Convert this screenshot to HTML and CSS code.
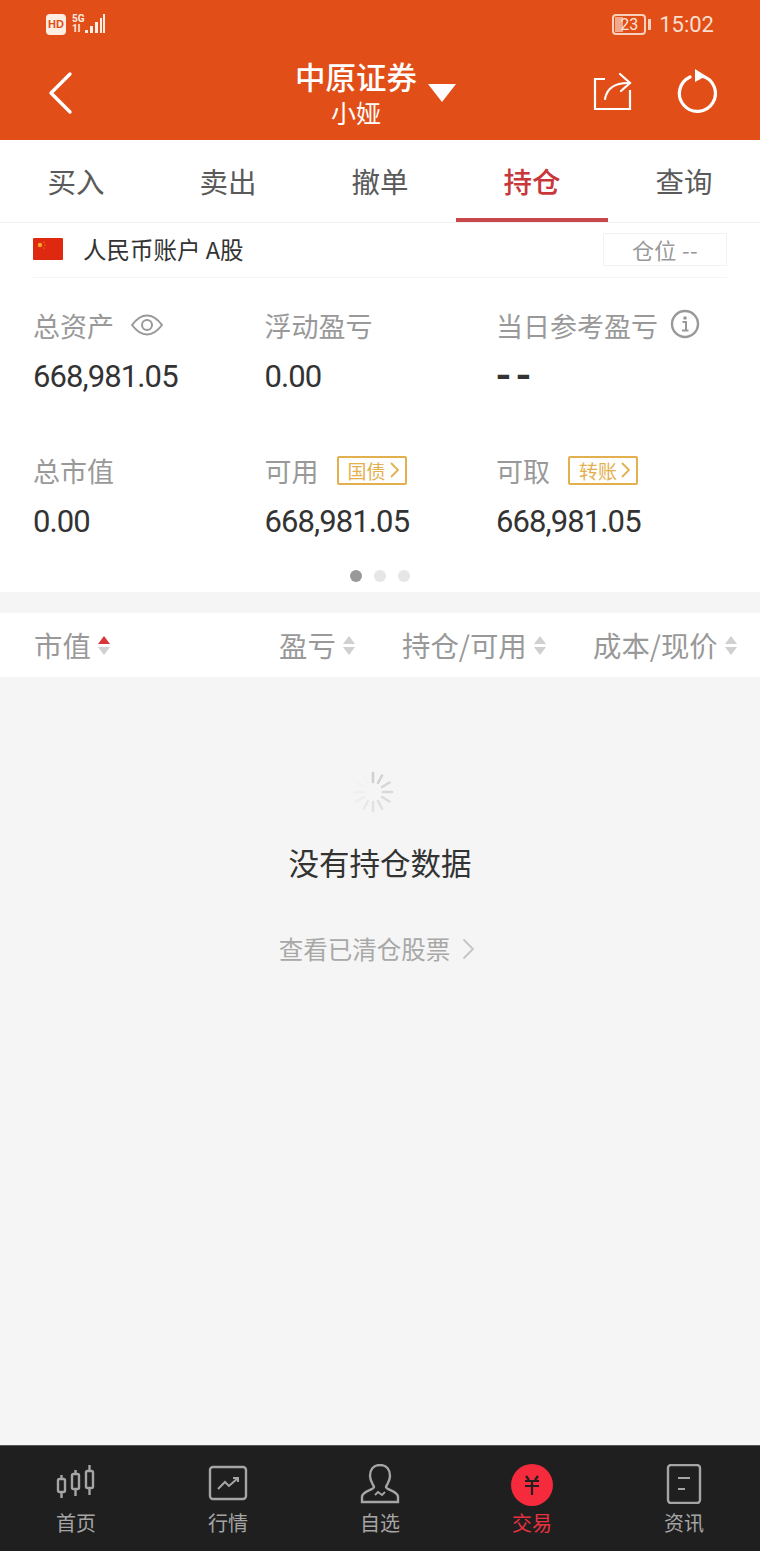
FILE: index.html
```html
<!DOCTYPE html>
<html lang="zh-CN">
<head>
    <meta charset="UTF-8">
    <title>持仓</title>
    <link rel="stylesheet" href="styles.css">
</head>
<body>
<div class="page">
    <!-- 顶部 -->
    <header class="header">
        <div class="statusbar">
            <div class="status-left">
                <span class="hd">HD</span>
                <span class="net"><span>5G</span><span>1l</span></span>
                <svg class="signal" width="21" height="21" viewBox="0 0 21 21"><g fill="#fdeee4"><rect x="0" y="17" width="3" height="3"/><rect x="5" y="13" width="3" height="7"/><rect x="10" y="9" width="3" height="11"/><rect x="15" y="5" width="2" height="15"/><rect x="18" y="1" width="2" height="19"/></g></svg>
            </div>
            <div class="status-right">
                <span class="battery"><span class="battery-fill"></span><span class="battery-num">23</span></span>
                <span class="battery-tip"></span>
                <span class="time">15:02</span>
            </div>
        </div>
        <div class="navbar">
            <svg class="back" width="28" height="44" viewBox="0 0 28 44"><path d="M23 3 L4 22 L23 41" fill="none" stroke="#fff" stroke-width="3.4" stroke-linecap="round" stroke-linejoin="round"/></svg>
            <div class="nav-title">
                <div class="broker">中原证券</div>
                <div class="user">小娅</div>
                <span class="caret"></span>
            </div>
            <div class="nav-icons">
                <svg width="40" height="40" viewBox="0 0 40 40"><path d="M12 7 H2 V37 H37 V18" fill="none" stroke="#fff" stroke-width="2.2"/><path d="M12 27 C14 16 22 11 35 11" fill="none" stroke="#fff" stroke-width="2.2" stroke-linecap="round"/><path d="M27 2 L37 11 L28 19" fill="none" stroke="#fff" stroke-width="2.2" stroke-linecap="round"/></svg>
                <svg width="42" height="46" viewBox="0 0 42 46"><path d="M15 8 A18 18 0 1 0 27 7" fill="none" stroke="#fff" stroke-width="3.2" stroke-linecap="round"/><path d="M20 0 L31 7 L20 13 Z" fill="#fff"/></svg>
            </div>
        </div>
    </header>

    <nav class="tabs">
        <div class="tab">买入</div>
        <div class="tab">卖出</div>
        <div class="tab">撤单</div>
        <div class="tab active">持仓</div>
        <div class="tab">查询</div>
    </nav>

    <section class="assets">
        <div class="account">
            <svg class="flag" width="30" height="22" viewBox="0 0 30 22"><rect width="30" height="22" rx="1" fill="#de2910"/><circle cx="7" cy="7" r="2.2" fill="#f5a623"/><circle cx="11" cy="4" r=".6" fill="#f5a623"/><circle cx="12" cy="7" r=".6" fill="#f5a623"/><circle cx="11" cy="10" r=".6" fill="#f5a623"/></svg>
            <span class="account-name">人民币账户 A股</span>
            <span class="position">仓位 --</span>
        </div>
        <div class="asset-grid">
            <div class="cell">
                <div class="cell-label">总资产
                    <svg class="eye" width="32" height="22" viewBox="0 0 32 22"><path d="M1 11 C7 3 12 1.500 16 1.500 C20 1.500 25 3 31 11 C25 19 20 20.500 16 20.500 C12 20.500 7 19 1 11 Z" fill="none" stroke="#999" stroke-width="2"/><circle cx="16" cy="11" r="5" fill="none" stroke="#999" stroke-width="2"/></svg>
                </div>
                <div class="cell-value">668,981.05</div>
            </div>
            <div class="cell">
                <div class="cell-label">浮动盈亏</div>
                <div class="cell-value">0.00</div>
            </div>
            <div class="cell">
                <div class="cell-label">当日参考盈亏
                    <svg class="info" width="30" height="30" viewBox="0 0 30 30"><circle cx="15" cy="15" r="13" fill="none" stroke="#999" stroke-width="2.400"/><circle cx="15" cy="9" r="1.800" fill="#999"/><path d="M12.500 13 H16 V21 M12 21.500 H18.500" fill="none" stroke="#999" stroke-width="2"/></svg>
                </div>
                <div class="cell-value dashes">--</div>
            </div>
            <div class="cell">
                <div class="cell-label">总市值</div>
                <div class="cell-value">0.00</div>
            </div>
            <div class="cell">
                <div class="cell-label">可用 <span class="tag">国债<svg width="9" height="16" viewBox="0 0 9 16"><path d="M1 1 L8 8 L1 15" fill="none" stroke="#e3b04f" stroke-width="1.800"/></svg></span></div>
                <div class="cell-value">668,981.05</div>
            </div>
            <div class="cell">
                <div class="cell-label">可取 <span class="tag">转账<svg width="9" height="16" viewBox="0 0 9 16"><path d="M1 1 L8 8 L1 15" fill="none" stroke="#e3b04f" stroke-width="1.800"/></svg></span></div>
                <div class="cell-value">668,981.05</div>
            </div>
        </div>
        <div class="dots">
            <span class="dot on"></span>
            <span class="dot"></span>
            <span class="dot"></span>
        </div>
    </section>

    <div class="table-head">
        <div class="col col-value">市值<span class="sort up"><i></i><b></b></span></div>
        <div class="col col-pl">盈亏<span class="sort"><i></i><b></b></span></div>
        <div class="col col-hold">持仓/可用<span class="sort"><i></i><b></b></span></div>
        <div class="col col-cost">成本/现价<span class="sort"><i></i><b></b></span></div>
    </div>

    <main class="empty">
        <svg class="spinner" width="42" height="42" viewBox="0 0 42 42">
            <g stroke-width="2.600" stroke-linecap="round" fill="none">
                <path d="M21 2 V11" stroke="#d0d0d0"/>
                <path d="M30 4.500 L26 12" stroke="#d2d2d2"/>
                <path d="M37.500 11.500 L30 16" stroke="#d6d6d6"/>
                <path d="M40 21 H31" stroke="#d8d8d8"/>
                <path d="M37.500 30.500 L30 26" stroke="#dcdcdc"/>
                <path d="M30 37.500 L26 30" stroke="#e0e0e0"/>
                <path d="M21 40 V31" stroke="#e2e2e2"/>
                <path d="M12 37.500 L16 30" stroke="#e8e8e8"/>
                <path d="M4.500 30.500 L12 26" stroke="#ededed"/>
                <path d="M2 21 H11" stroke="#f0f0f0"/>
                <path d="M4.500 11.500 L12 16" stroke="#f2f2f2"/>
                <path d="M12 4.500 L16 12" stroke="#f3f3f3"/>
            </g>
        </svg>
        <div class="empty-title">没有持仓数据</div>
        <div class="empty-link">查看已清仓股票
            <svg width="13" height="22" viewBox="0 0 13 22"><path d="M1.500 1.500 L11 11 L1.500 20.500" fill="none" stroke="#c4c4c4" stroke-width="1.800"/></svg>
        </div>
    </main>

    <!-- 底部导航 -->
    <footer class="tabbar">
        <div class="tabbar-item">
            <svg width="40" height="38" viewBox="0 0 40 38"><g fill="none" stroke="#a5a5a5" stroke-width="2.400"><rect x="2" y="14" width="7" height="13" rx="1.500"/><path d="M5.500 10 V14 M5.500 27 V33"/><rect x="16" y="9" width="7" height="15" rx="1.500"/><path d="M19.500 5 V9 M19.500 24 V31"/><rect x="30" y="6" width="7" height="17" rx="1.500"/><path d="M33.500 0 V6 M33.500 23 V30"/></g></svg>
            <span>首页</span>
        </div>
        <div class="tabbar-item">
            <svg width="40" height="38" viewBox="0 0 40 38"><rect x="2" y="2" width="36" height="32" rx="3" fill="none" stroke="#a5a5a5" stroke-width="2.400"/><path d="M10 24 L17 17 L21 21 L30 13 M25 13 H30 V17" fill="none" stroke="#a5a5a5" stroke-width="2"/></svg>
            <span>行情</span>
        </div>
        <div class="tabbar-item">
            <svg width="40" height="40" viewBox="0 0 40 40"><path d="M20 1 C13 1 10 6 10 12 C10 17 13 20 14 23 C14 26 2 27 2 33 V38 H38 V33 C38 27 26 26 26 23 C27 20 30 17 30 12 C30 6 27 1 20 1 Z" fill="none" stroke="#a5a5a5" stroke-width="2.400"/><path d="M15 31 L18 28 L22 31 L25 28" fill="none" stroke="#a5a5a5" stroke-width="1.800"/></svg>
            <span>自选</span>
        </div>
        <div class="tabbar-item active">
            <span class="trade-icon">
                <svg width="16" height="20" viewBox="0 0 16 20"><path d="M2 1 L5 5 M14 1 L11 5 M1 6 H15 M1 11 H15 M8 6 V20" fill="none" stroke="#1f1f1f" stroke-width="2.200"/></svg>
            </span>
            <span>交易</span>
        </div>
        <div class="tabbar-item">
            <svg width="40" height="40" viewBox="0 0 40 40"><rect x="4" y="1" width="32" height="38" rx="3" fill="none" stroke="#a5a5a5" stroke-width="2.400"/><path d="M14 14 H26 M14 25 H21" fill="none" stroke="#a5a5a5" stroke-width="2"/></svg>
            <span>资讯</span>
        </div>
    </footer>
</div>
</body>
</html>
```

FILE: styles.css
```css
* {
    box-sizing: border-box;
}
body {
    margin: 0;
    font-family: "Noto Sans CJK SC", "Noto Sans", sans-serif;
    background-color: #f5f5f5;
}
.page {
    width: 760px;
    height: 1551px;
    display: flex;
    flex-direction: column;
    overflow: hidden;
}

/* header */
.header {
    height: 140px;
    background-color: #e24e17;
    color: #fff;
}
.statusbar {
    height: 48px;
    padding: 12px 46px 0;
    display: flex;
    justify-content: space-between;
}
.status-left {
    display: flex;
    align-items: flex-start;
}
.hd {
    width: 20px;
    height: 21px;
    margin-top: 2px;
    background: #fdeee4;
    color: #e24e17;
    border-radius: 4px;
    font: bold 11px/21px "Liberation Sans", sans-serif;
    text-align: center;
}
.net {
    margin: 2px 0 0 6px;
    display: flex;
    flex-direction: column;
    font: bold 10px/10px "Roboto", sans-serif;
    color: #fdeee4;
    width: 14px;
}
.signal {
    margin: 1px 0 0 -1px;
}
.status-right {
    display: flex;
    align-items: flex-start;
    color: #fbe6d8;
}
.battery {
    position: relative;
    width: 34px;
    height: 21px;
    margin-top: 2px;
    border: 2px solid #f8d0bb;
    border-radius: 4px;
}
.battery-fill {
    position: absolute;
    left: 1px;
    top: 1px;
    bottom: 1px;
    width: 8px;
    background: #f2a98a;
}
.battery-num {
    position: relative;
    display: block;
    font: 16px/17px "Roboto", sans-serif;
    text-align: center;
}
.battery-tip {
    width: 3px;
    height: 11px;
    margin: 7px 0 0 2px;
    background: #f8d0bb;
}
.time {
    margin-left: 8px;
    font: 22px/26px "Roboto", sans-serif;
    color: #f9dfce;
}
.navbar {
    height: 92px;
    position: relative;
    display: flex;
    align-items: center;
    justify-content: space-between;
    padding: 0 43px 4px 47px;
}
.nav-title {
    position: absolute;
    left: 0;
    right: 48px;
    top: 10px;
    text-align: center;
}
.broker {
    font-size: 30.5px;
    font-weight: 500;
    line-height: 36px;
}
.user {
    margin-top: 3px;
    font-size: 25px;
    line-height: 30px;
}
.caret {
    position: absolute;
    left: 428px;
    top: 26px;
    width: 0;
    height: 0;
    border-left: 14px solid transparent;
    border-right: 14px solid transparent;
    border-top: 18px solid #fff;
}
.back {
    margin-top: 2px;
}
.nav-icons {
    display: flex;
    align-items: center;
    gap: 42px;
}

/* tabs */
.tabs {
    height: 83px;
    display: flex;
    background: #fff;
    border-bottom: 1px solid #f2f2f2;
}
.tab {
    width: 152px;
    text-align: center;
    font-size: 28.5px;
    line-height: 82px;
    color: #5a5a5a;
}
.tab.active {
    color: #c8373a;
    font-weight: 500;
    border-bottom: 4px solid #c8474a;
    height: 82px;
}

/* assets */
.assets {
    height: 369px;
    background: #fff;
}
.account {
    height: 55px;
    margin: 0 33px;
    display: flex;
    align-items: center;
    border-bottom: 1px solid #f4f4f4;
}
.flag {
    margin-bottom: 2px;
}
.account-name {
    margin-left: 20px;
    margin-top: -3px;
    font-size: 23.5px;
    color: #333;
}
.position {
    margin-left: auto;
    width: 124px;
    height: 33px;
    border: 1px solid #f2f2f2;
    text-align: center;
    font-size: 22px;
    line-height: 31px;
    color: #999;
    letter-spacing: 0.4px;
    margin-top: -2px;
}
.asset-grid {
    display: grid;
    grid-template-columns: 231.5px 231.5px 231.5px;
    grid-auto-rows: 145px;
    padding: 29px 0 0 33px;
}
.cell-label {
    display: flex;
    align-items: center;
    height: 36px;
    font-size: 27px;
    color: #999;
}
.eye {
    margin-left: 17px;
}
.info {
    margin-left: 12px;
    margin-top: -2px;
}
.cell-value {
    margin-top: 15px;
    font-family: "Roboto", sans-serif;
    font-size: 31px;
    line-height: 38px;
    letter-spacing: -0.9px;
    color: #333;
}
.dashes {
    margin-top: 13px;
    font-size: 44px;
    font-weight: 500;
    letter-spacing: 5px;
}
.tag {
    display: inline-flex;
    align-items: center;
    height: 29px;
    margin-left: 18px;
    padding: 0 6px 0 9px;
    border: 2px solid #e3b04f;
    border-radius: 2px;
    font-size: 19px;
    color: #e3b04f;
    gap: 4px;
}
.dots {
    display: flex;
    justify-content: center;
    gap: 12px;
    margin-top: -27px;
}
.dot {
    width: 12px;
    height: 12px;
    border-radius: 50%;
    background: #e6e6e6;
}
.dot.on {
    background: #999;
}

/* table head */
.table-head {
    margin-top: 21px;
    height: 64px;
    flex-shrink: 0;
    background: #fff;
    position: relative;
    font-size: 28.4px;
    color: #999;
}
.col {
    position: absolute;
    display: flex;
    align-items: center;
    top: 13px;
    line-height: 38px;
}
.col-value { left: 34px; }
.col-pl { left: 279px; }
.col-hold { left: 402px; }
.col-cost { left: 593px; }
.sort {
    display: flex;
    flex-direction: column;
    gap: 3px;
    margin-left: 7px;
}
.sort i, .sort b {
    width: 0;
    height: 0;
    border-left: 6px solid transparent;
    border-right: 6px solid transparent;
}
.sort i {
    border-bottom: 8px solid #d0d0d0;
}
.sort b {
    border-top: 8px solid #d0d0d0;
}
.sort.up i {
    border-bottom-color: #d9363a;
}

/* empty */
.empty {
    flex: 1;
    display: flex;
    flex-direction: column;
    align-items: center;
    padding-top: 94px;
    background: #f5f5f5;
}
.spinner {
    margin-right: 14px;
}
.empty-title {
    margin-top: 27px;
    font-size: 30.5px;
    line-height: 44px;
    color: #333;
}
.empty-link {
    margin-top: 48px;
    margin-right: 6px;
    display: flex;
    align-items: center;
    gap: 12px;
    font-size: 24.5px;
    line-height: 34px;
    color: #a8a8a8;
}

/* bottom tabs */
.tabbar {
    height: 106px;
    flex-shrink: 0;
    display: flex;
    background: #1f1f1f;
    border-top: 1px solid #555;
}
.tabbar-item {
    width: 152px;
    padding-top: 18px;
    display: flex;
    flex-direction: column;
    align-items: center;
    font-size: 20px;
    line-height: 28px;
    color: #a5a5a5;
}
.tabbar-item svg {
    height: 40px;
}
.tabbar-item.active {
    color: #e8323f;
}
.trade-icon {
    width: 42px;
    height: 42px;
    margin-bottom: -2px;
    border-radius: 50%;
    background: #f52a3c;
    display: flex;
    align-items: center;
    justify-content: center;
}
.trade-icon svg {
    height: 20px;
}
.tabbar-item > span:last-child {
    margin-top: 5px;
}
```
